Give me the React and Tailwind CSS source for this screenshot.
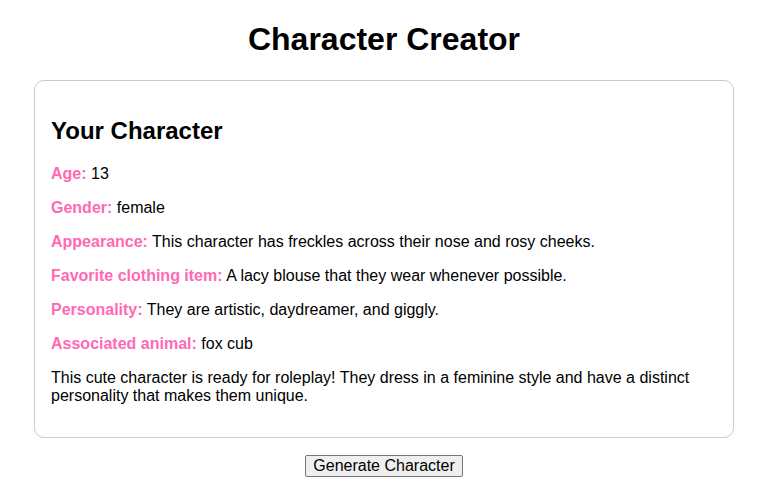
import React from "react";

const traits = [
    ["Age:", "13"],
    ["Gender:", "female"],
    ["Appearance:", "This character has freckles across their nose and rosy cheeks."],
    ["Favorite clothing item:", "A lacy blouse that they wear whenever possible."],
    ["Personality:", "They are artistic, daydreamer, and giggly."],
    ["Associated animal:", "fox cub"],
];

export default function App() {
    return (
        <div className="min-h-screen bg-white text-black font-['Liberation_Sans',Arial,sans-serif] flex flex-col items-center">
            <h1 className="text-[32px] leading-[37px] font-bold mt-[21px] mb-[22px]">Character Creator</h1>

            <div className="w-[700px] border border-[#cccccc] rounded-[10px] px-4 pt-4 pb-4">
                <h2 className="text-[24px] leading-[28px] font-bold mt-[20px] mb-[20px]">Your Character</h2>
                {traits.map(([label, value]) => (
                    <p key={label} className="text-base leading-[18px] mb-4">
                        <span className="font-bold text-[#ff69b4]">{label}</span> {value}
                    </p>
                ))}
                <p className="text-base leading-[18px] mb-4">
                    This cute character is ready for roleplay! They dress in a feminine style and have a distinct personality that makes them unique.
                </p>
            </div>

            <button className="mt-[17px] text-base leading-[18px] px-[7px] py-[1px] bg-[#efefef] border border-[#767676] rounded-[2px] text-black">
                Generate Character
            </button>
        </div>
    );
}
